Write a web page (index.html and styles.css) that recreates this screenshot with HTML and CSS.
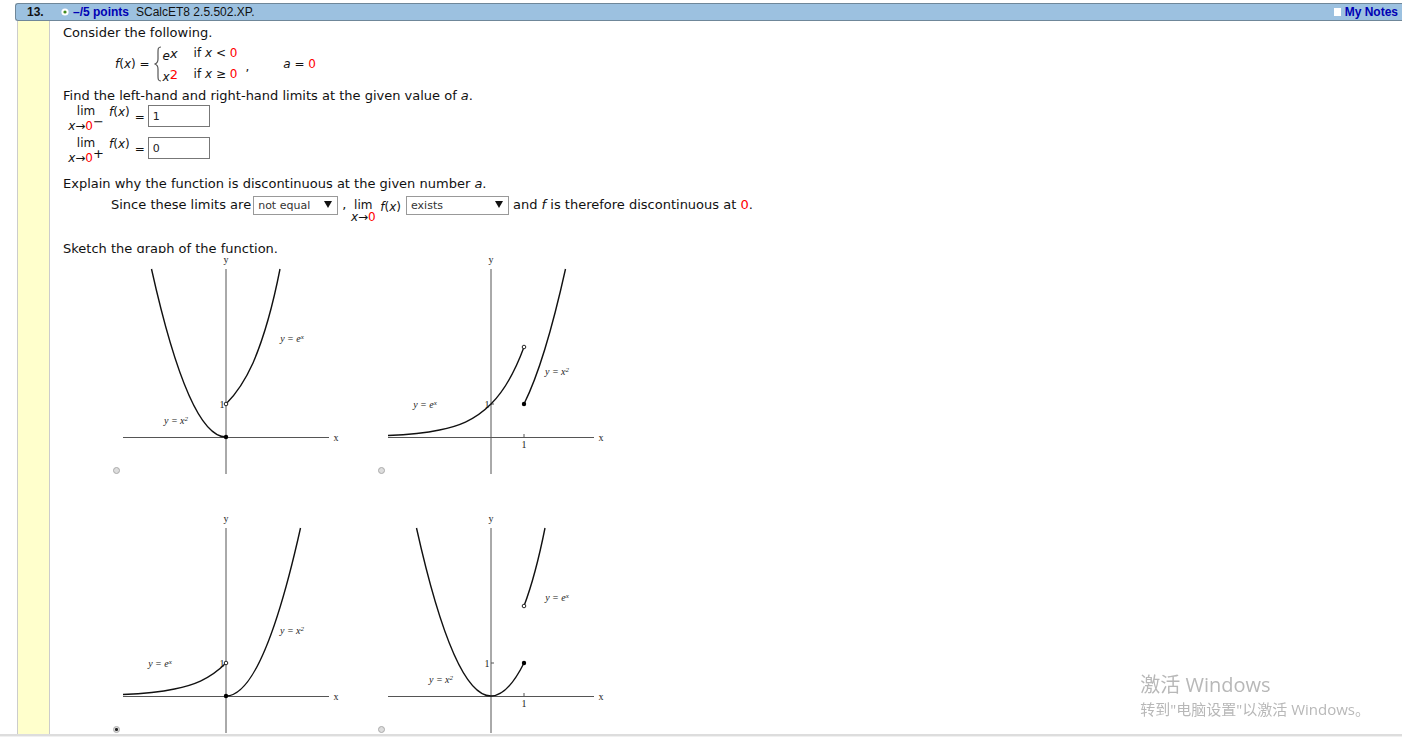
FILE: index.html
```
<!DOCTYPE html>
<html lang="en">
<head>
  <meta charset="UTF-8">
  <meta name="viewport" content="width=device-width, initial-scale=1.0">
  <title>SCalcET8 2.5.502.XP</title>
  <link rel="stylesheet" href="styles.css">
</head>
<body>
<div class="question">
  <header class="question-header">
    <span class="number">13.</span>
    <svg class="dot" viewBox="0 0 8 8"><circle cx="4" cy="4" r="3.6" fill="#fff"/><circle cx="4" cy="4" r="1.6" fill="#3f8a1c"/></svg>
    <a href="#" class="points">–/5 points</a>
    <span class="source">SCalcET8 2.5.502.XP.</span>
    <a href="#" class="notes"><span class="notes-icon"></span>My Notes</a>
  </header>

  <form class="question-body">
    <p class="line">Consider the following.</p>

    <div class="formula">
      <span class="lhs"><i>f</i>(<i>x</i>) =</span>
      <svg class="brace" viewBox="0 0 10 36" fill="none" stroke="#555" stroke-width="1.2"><path d="M8 1C5 1 5 3 5 6V13C5 16 4 17.500 1.500 18C4 18.500 5 20 5 23V30C5 33 5 35 8 35"/></svg>
      <div class="cases">
        <span class="power"><i>e</i><sup><i>x</i></sup></span><span>if <i>x</i> &lt; <b>0</b></span>
        <span class="power"><i>x</i><sup><b>2</b></sup></span><span>if <i>x</i> ≥ <b>0</b></span>
      </div>
      <span class="comma">,</span>
      <span class="point"><i>a</i> = <b>0</b></span>
    </div>

    <p class="line">Find the left-hand and right-hand limits at the given value of <i>a</i>.</p>

    <div class="limit-row">
      <span class="limit"><span>lim</span><span class="under"><i>x</i>→<b>0</b><sup>−</sup></span></span>
      <span class="fx"><i>f</i>(<i>x</i>)</span>
      <label for="left-limit">=</label>
      <input type="text" id="left-limit" value="1">
    </div>
    <div class="limit-row">
      <span class="limit"><span>lim</span><span class="under"><i>x</i>→<b>0</b><sup>+</sup></span></span>
      <span class="fx"><i>f</i>(<i>x</i>)</span>
      <label for="right-limit">=</label>
      <input type="text" id="right-limit" value="0">
    </div>

    <p class="line explain">Explain why the function is discontinuous at the given number <i>a</i>.</p>

    <div class="sentence">
      <label for="compare">Since these limits are</label>
      <span class="select compare">
        <select id="compare">
          <option selected>not equal</option>
          <option>equal</option>
        </select>
      </span>
      <span class="comma">,</span>
      <label for="exists" class="limit-label">
        <span class="limit"><span>lim</span><span class="under"><i>x</i>→<b>0</b></span></span>
        <span class="fx"><i>f</i>(<i>x</i>)</span>
      </label>
      <span class="select exists">
        <select id="exists">
          <option selected>exists</option>
          <option>does not exist</option>
        </select>
      </span>
      <span>and <i>f</i> is therefore discontinuous at <b>0</b>.</span>
    </div>

    <p class="line">Sketch the graph of the function.</p>

    <!-- one unit on the axes = 33px, origin at 0,0 -->
    <div class="graphs">
      <label class="graph">
        <input type="radio" name="graph">
        <svg viewBox="-104 -184 222 222">
          <path class="axis" d="M0 -168V37M-103 0.500H103"/>
          <text x="0" y="-174">y</text>
          <text x="110" y="4">x</text>
          <text x="-4" y="-29">1</text>
          <path class="curve" d="M-74.500 -168Q-37 0 0 0"/>
          <path class="curve" d="M0 -33C9 -42 18 -54 27 -74C36 -95 45 -122 54 -168"/>
          <circle class="open" cx="0" cy="-33" r="1.8"/>
          <circle class="closed" cx="0" cy="0" r="2.2"/>
          <text class="eq" x="-50" y="-13">y = x<tspan class="exp" dy="-3">2</tspan></text>
          <text class="eq" x="66" y="-95">y = e<tspan class="exp" dy="-3">x</tspan></text>
        </svg>
      </label>
      <label class="graph">
        <input type="radio" name="graph">
        <svg viewBox="-104 -184 222 222">
          <path class="axis" d="M0 -168V37M-103 0.500H103M0 -33H3M33 0V-3"/>
          <text x="0" y="-174">y</text>
          <text x="110" y="4">x</text>
          <text x="-4" y="-29">1</text>
          <text x="33" y="11">1</text>
          <path class="curve" d="M-103 -1.500C-86 -2.200 -69 -3.300 -51.500 -7C-34 -10.500 -17 -16 0 -33C11 -44 22 -60 33 -90"/>
          <path class="curve" d="M33 -33Q53.700 -74.400 74.500 -168"/>
          <circle class="open" cx="33" cy="-90" r="1.8"/>
          <circle class="closed" cx="33" cy="-33" r="2.2"/>
          <text class="eq" x="-66" y="-29">y = e<tspan class="exp" dy="-3">x</tspan></text>
          <text class="eq" x="66" y="-62">y = x<tspan class="exp" dy="-3">2</tspan></text>
        </svg>
      </label>
      <label class="graph">
        <input type="radio" name="graph" checked>
        <svg viewBox="-104 -184 222 222">
          <path class="axis" d="M0 -168V37M-103 0.500H103"/>
          <text x="0" y="-174">y</text>
          <text x="110" y="4">x</text>
          <text x="-4" y="-29">1</text>
          <path class="curve" d="M-103 -1.500C-86 -2.200 -69 -3.300 -51.500 -7C-34 -10.500 -17 -16 0 -33"/>
          <path class="curve" d="M0 0Q37 0 74.500 -168"/>
          <circle class="open" cx="0" cy="-33" r="1.8"/>
          <circle class="closed" cx="0" cy="0" r="2.2"/>
          <text class="eq" x="-66" y="-29">y = e<tspan class="exp" dy="-3">x</tspan></text>
          <text class="eq" x="66" y="-62">y = x<tspan class="exp" dy="-3">2</tspan></text>
        </svg>
      </label>
      <label class="graph">
        <input type="radio" name="graph">
        <svg viewBox="-104 -184 222 222">
          <path class="axis" d="M0 -168V37M-103 0.500H103M0 -33H3M33 0V-3"/>
          <text x="0" y="-174">y</text>
          <text x="110" y="4">x</text>
          <text x="-4" y="-29">1</text>
          <text x="33" y="11">1</text>
          <path class="curve" d="M-74.500 -168Q-37 0 0 0Q16.500 0 33 -33"/>
          <path class="curve" d="M33 -90C40 -108.500 47 -133 54 -168"/>
          <circle class="open" cx="33" cy="-90" r="1.8"/>
          <circle class="closed" cx="33" cy="-33" r="2.2"/>
          <text class="eq" x="-50" y="-13">y = x<tspan class="exp" dy="-3">2</tspan></text>
          <text class="eq" x="66" y="-95">y = e<tspan class="exp" dy="-3">x</tspan></text>
        </svg>
      </label>
    </div>
  </form>
</div>
<div class="bottom-bar"></div>

<div class="activate" lang="zh-CN">
  <div class="activate-title">激活 Windows</div>
  <div>转到"电脑设置"以激活 Windows。</div>
</div>
</body>
</html>
```
FILE: styles.css
```
* {
  margin: 0;
  padding: 0;
  box-sizing: border-box;
}

body {
  height: 100vh;
  display: flex;
  flex-direction: column;
  overflow: hidden;
  font-family: Verdana, "DejaVu Sans", sans-serif;
  font-size: 13px;
  line-height: 16px;
  color: #111;
  background: #fff;
}

a {
  color: #0000b4;
  text-decoration: none;
}

/* red values in the formulas */
b {
  font-weight: normal;
  color: #f00;
}

.question {
  flex: 1;
  min-height: 0;
  display: flex;
  flex-direction: column;
  padding: 3px 0 0 15px;
}

.question-header {
  flex: none;
  display: flex;
  align-items: center;
  height: 18px;
  padding: 0 4px 0 11px;
  background: #9cc1e0;
  border: 1px solid #6f8799;
  border-right: none;
  border-radius: 3px 0 0 3px;
  font-family: Arial, "Liberation Sans", sans-serif;
  font-size: 12px;
}

.number {
  width: 33px;
  font-weight: bold;
}

.dot {
  width: 8px;
  height: 8px;
  margin: 0 4px 0 1px;
}

.points {
  margin-right: 7px;
  font-weight: bold;
}

.notes {
  display: flex;
  align-items: center;
  gap: 4px;
  margin-left: auto;
  font-weight: bold;
}

.notes-icon {
  width: 7px;
  height: 8px;
  background: #fff;
}

.question-body {
  flex: 1;
  min-height: 0;
  overflow: hidden;
  margin-left: 3px;
  padding: 4px 0 0 14px;
  border-left: 31px solid #ffffcc;
  box-shadow: inset 1px 0 #ccc, -1px 0 #ccc;
}

.formula {
  display: flex;
  align-items: center;
  height: 47px;
  padding-left: 52px;
  font-size: 12px;
}

.lhs {
  padding-bottom: 2px;
}

.brace {
  width: 10px;
  height: 36px;
  margin: 0 0 2px 3px;
}

.cases {
  display: grid;
  grid-template-columns: 31px auto;
  row-gap: 2px;
  padding-top: 1px;
}

.power {
  padding-top: 3px;
}

sup {
  font-size: 13px;
  line-height: 0;
  vertical-align: 4px;
}

.power sup {
  vertical-align: 2px;
}

.formula .comma {
  margin: 4px 34px 0 8px;
}

.point {
  padding-bottom: 2px;
}

.limit-row {
  display: flex;
  height: 32px;
  font-size: 12px;
}

.limit {
  display: flex;
  flex-direction: column;
  align-items: center;
  width: 38px;
  margin-left: 4px;
  line-height: 12px;
}

.limit-row .limit {
  line-height: 14px;
}

.limit-row .under {
  padding-top: 1px;
}

.under {
  white-space: nowrap;
}

.fx {
  margin: 0 5px 0 4px;
}

.limit-row label {
  width: 13px;
  padding-top: 5px;
}

.limit-row input {
  width: 62px;
  height: 22px;
  margin-top: 1px;
  padding: 0 4px;
  border: 1px solid #777;
  font-family: inherit;
  font-size: 11px;
  color: #222;
}

.explain {
  margin-top: 8px;
}

.sentence {
  display: flex;
  align-items: flex-start;
  height: 49px;
  padding: 5px 0 0 48px;
}

.sentence .comma {
  margin-right: 3px;
}

.limit-label {
  display: flex;
  font-size: 12px;
}

.limit-label .limit {
  width: 28px;
  margin-left: 0;
  padding-top: 2px;
}

.limit-label .fx {
  margin: 0 5px 0 3px;
  padding-top: 2px;
}

.select {
  position: relative;
  margin: -1px 4px 0 2px;
}

.select::after {
  content: "";
  position: absolute;
  top: 5px;
  right: 6px;
  border: 4px solid transparent;
  border-top: 7px solid #111;
  border-bottom: none;
  pointer-events: none;
}

.select select {
  display: block;
  width: 100%;
  height: 19px;
  padding: 0 4px;
  appearance: none;
  border: 1px solid #999;
  border-radius: 0;
  background: #fff;
  color: #333;
  font-family: inherit;
  font-size: 11px;
}

.compare {
  width: 85px;
}

.exists {
  width: 103px;
  margin-left: 0;
}

/* pulled up, the graphs cover the descenders of the line above */
.graphs {
  display: grid;
  grid-template-columns: 265px 265px;
  row-gap: 37px;
  margin-top: -4px;
  padding-left: 50px;
}

.graph {
  display: flex;
  align-items: flex-end;
  gap: 2px;
}

.graph input {
  appearance: none;
  width: 7px;
  height: 7px;
  margin-bottom: 1px;
  border: 1px solid #aaa;
  border-radius: 50%;
  background: #ddd;
}

.graph input:checked {
  background: radial-gradient(#222 35%, #ddd 50%);
}

.graph svg {
  position: relative;
  width: 222px;
  height: 222px;
  background: #fff;
}

.graph text {
  font-family: "Times New Roman", "Liberation Serif", serif;
  font-size: 10px;
  text-anchor: middle;
  fill: #222;
}

.graph .eq {
  font-style: italic;
}

.graph .exp {
  font-size: 7px;
}

.axis {
  stroke: #555;
  stroke-width: 1;
  fill: none;
}

.curve {
  stroke: #111;
  stroke-width: 1.4;
  fill: none;
}

.open {
  fill: #fff;
  stroke: #222;
  stroke-width: 1;
}

.closed {
  fill: #000;
}

.bottom-bar {
  flex: none;
  height: 3px;
  background: #f0f0f0;
  border-top: 2px solid #ddd;
}

.activate {
  position: fixed;
  right: 32px;
  bottom: 17px;
  font-family: "Open Sans", "Noto Sans CJK SC", sans-serif;
  font-size: 15px;
  line-height: 22px;
  color: #b8b8b8;
}

.activate-title {
  font-size: 20px;
  line-height: 26px;
}
```
